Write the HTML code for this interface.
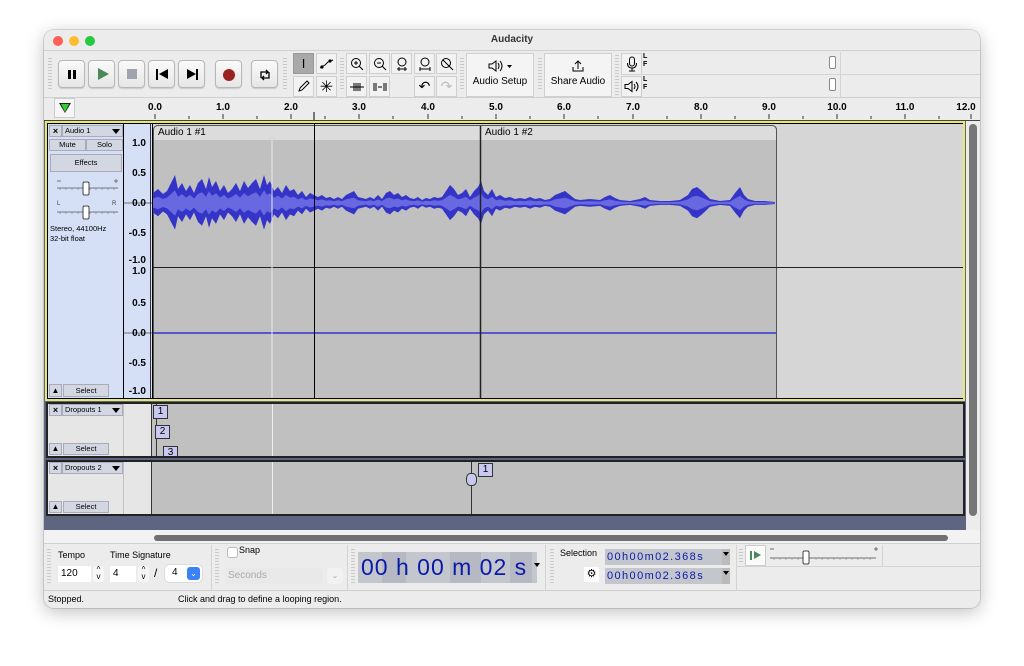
<!DOCTYPE html>
<html><head><meta charset="utf-8"><style>
*{box-sizing:border-box;margin:0;padding:0}
body{width:1024px;height:666px;background:#fff;position:relative;overflow:hidden;font-family:"Liberation Sans",sans-serif;color:#000}
.a{position:absolute}
.win{left:44px;top:30px;width:936px;height:578px;background:#ececec;border-radius:10px;box-shadow:0 4px 18px rgba(0,0,0,.25),0 0 0 1px rgba(0,0,0,.12);overflow:hidden}
.btn{position:absolute;width:27px;height:28px;background:linear-gradient(#fafafa,#e6e6e6);border:1px solid #b8b8b8;border-radius:4px;box-shadow:0 1px 1px rgba(0,0,0,.15)}
.tb{position:absolute;width:21px;height:21px;background:#f2f2f2;border:1px solid #cfcfcf;display:flex;align-items:center;justify-content:center;font-size:13px}
.grip{position:absolute;width:4px;background:repeating-linear-gradient(#c9c9c9 0 1px,transparent 1px 3px)}
.rl{position:absolute;top:102px;font-size:10px;font-weight:bold;transform:translateX(-50%)}
.lp{position:absolute;background:#d5dff5}
.small{font-size:7.5px;position:absolute}
.sel{position:absolute;background:#d3d7e2;border:1px solid #aab;font-size:7.5px;text-align:center}
.lab{position:absolute;background:#c8c8f0;border:1px solid #333;font-size:10px;width:15px;height:14px;text-align:center;line-height:12px}
</style></head><body>
<div class="a win">
 <div class="a" style="left:0;top:0;width:936px;height:20px;background:#ececec"></div>
 <div class="a" style="left:9px;top:6px;width:10px;height:10px;border-radius:50%;background:#fe5f57"></div>
 <div class="a" style="left:25px;top:6px;width:10px;height:10px;border-radius:50%;background:#febc2e"></div>
 <div class="a" style="left:41px;top:6px;width:10px;height:10px;border-radius:50%;background:#28c840"></div>
 <div class="a" style="left:0;top:4px;width:936px;text-align:center;font-size:10px;font-weight:bold;color:#333">Audacity</div>
 <div class="a" style="left:0;top:20px;width:936px;height:1px;background:#d0d0d0"></div>
</div>
<!-- toolbar -->
<div class="grip" style="left:48px;top:58px;height:33px"></div>
<div class="btn" style="left:58px;top:60px"><div class="a" style="left:9px;top:9px;width:3px;height:9px;background:#000"></div><div class="a" style="left:14px;top:9px;width:3px;height:9px;background:#000"></div></div>
<div class="btn" style="left:88px;top:60px"><div class="a" style="left:9px;top:7px;border-left:11px solid #4a8a5a;border-top:6px solid transparent;border-bottom:6px solid transparent"></div></div>
<div class="btn" style="left:118px;top:60px"><div class="a" style="left:8px;top:8px;width:10px;height:10px;background:#a0a4ac"></div></div>
<div class="btn" style="left:148px;top:60px"><div class="a" style="left:7px;top:8px;width:2px;height:11px;background:#000"></div><div class="a" style="left:10px;top:8px;border-right:9px solid #000;border-top:5.5px solid transparent;border-bottom:5.5px solid transparent"></div></div>
<div class="btn" style="left:178px;top:60px"><div class="a" style="left:8px;top:8px;border-left:9px solid #000;border-top:5.5px solid transparent;border-bottom:5.5px solid transparent"></div><div class="a" style="left:17px;top:8px;width:2px;height:11px;background:#000"></div></div>
<div class="btn" style="left:215px;top:60px"><div class="a" style="left:7px;top:8px;width:12px;height:12px;border-radius:50%;background:#9c2222"></div></div>
<div class="btn" style="left:251px;top:60px"><svg class="a" style="left:6px;top:7px" width="14" height="14" viewBox="0 0 14 14" fill="none" stroke="#000" stroke-width="1.3"><path d="M3 10V4h7M8 2l2 2-2 2M11 4v6H4M6 12l-2-2 2-2"/></svg></div>
<div class="grip" style="left:283px;top:58px;height:33px"></div>
<div class="tb" style="left:293px;top:53px;background:#a9a9a9;border-color:#999">I</div>
<div class="tb" style="left:316px;top:53px"><svg width="15" height="12"><path d="M1 10L6 7 9 4 14 2" stroke="#000" fill="none"/><circle cx="3" cy="9" r="1.6"/><circle cx="11" cy="3" r="1.6"/></svg></div>
<div class="tb" style="left:293px;top:76px"><svg width="13" height="13"><path d="M2 11l1-3 7-7 2 2-7 7z" stroke="#000" fill="none"/></svg></div>
<div class="tb" style="left:316px;top:76px;font-size:16px">✳</div>
<div class="grip" style="left:340px;top:58px;height:33px"></div>
<div class="tb" style="left:346px;top:53px"><svg width="14" height="14"><circle cx="6" cy="6" r="4.5" stroke="#000" fill="none"/><path d="M9 9l4 4M4 6h4M6 4v4" stroke="#000"/></svg></div>
<div class="tb" style="left:369px;top:53px"><svg width="14" height="14"><circle cx="6" cy="6" r="4.5" stroke="#000" fill="none"/><path d="M9 9l4 4M4 6h4" stroke="#000"/></svg></div>
<div class="tb" style="left:391px;top:53px"><svg width="14" height="14"><circle cx="7" cy="5" r="4" stroke="#000" fill="none"/><path d="M2 12h10M4 10v4M10 10v4" stroke="#000"/></svg></div>
<div class="tb" style="left:414px;top:53px"><svg width="14" height="14"><circle cx="7" cy="5" r="4" stroke="#000" fill="none"/><path d="M2 12h10M2 10v4M12 10v4" stroke="#000"/></svg></div>
<div class="tb" style="left:436px;top:53px"><svg width="14" height="14"><circle cx="6" cy="6" r="4.5" stroke="#000" fill="none"/><path d="M9 9l4 4M3 3l6 6" stroke="#000"/></svg></div>
<div class="tb" style="left:346px;top:76px"><svg width="16" height="12" stroke="#000" fill="none"><path d="M1 6h14M5 2v8M7 2v8M9 2v8M11 2v8"/></svg></div>
<div class="tb" style="left:369px;top:76px"><svg width="16" height="12" stroke="#000" fill="none"><path d="M2 2v8M4 2v8M6 6h4M12 2v8M14 2v8"/></svg></div>
<div class="tb" style="left:414px;top:76px;font-size:14px">↶</div>
<div class="tb" style="left:436px;top:76px;font-size:14px;color:#bbb">↷</div>
<div class="grip" style="left:460px;top:58px;height:33px"></div>
<div class="a" style="left:466px;top:53px;width:68px;height:44px;background:#f4f4f4;border:1px solid #cfcfcf;text-align:center;font-size:10px"><svg style="margin-top:5px" width="26" height="14" fill="none" stroke="#000"><path d="M2 5h3l4-3v10l-4-3H2z M11 4q2 3 0 6M13 2q4 5 0 10"/><path d="M20 6h5l-2.5 3z" fill="#000" stroke="none"/></svg><div style="margin-top:0">Audio Setup</div></div>
<div class="grip" style="left:538px;top:58px;height:33px"></div>
<div class="a" style="left:544px;top:53px;width:68px;height:44px;background:#f4f4f4;border:1px solid #cfcfcf;text-align:center;font-size:10px"><svg style="margin-top:5px" width="14" height="14" fill="none" stroke="#000"><path d="M2 8v4h10V8M7 10V2M4 5l3-3 3 3"/></svg><div style="margin-top:0">Share Audio</div></div>
<div class="grip" style="left:615px;top:55px;height:40px"></div>
<div class="tb" style="left:621px;top:53px;height:22px"><svg width="12" height="16" fill="none" stroke="#000"><rect x="3.5" y="1" width="5" height="9" rx="2.5"/><path d="M1.5 7q0 5 4.5 5t4.5-5M6 12v3M3 15h6"/></svg></div>
<div class="tb" style="left:621px;top:76px;height:21px"><svg width="16" height="13" fill="none" stroke="#000"><path d="M1 4.5h3l4-3v10l-4-3H1z M10 4q2 2.5 0 5M12 2q4 4.5 0 9"/></svg></div>
<div class="a" style="left:643px;top:53px;font-size:7px;font-weight:bold;line-height:8px">L<br>F</div>
<div class="a" style="left:643px;top:76px;font-size:7px;font-weight:bold;line-height:8px">L<br>F</div>
<div class="a" style="left:829px;top:56px;width:7px;height:13px;border:1px solid #888;background:#fff;border-radius:2px"></div>
<div class="a" style="left:829px;top:78px;width:7px;height:13px;border:1px solid #888;background:#fff;border-radius:2px"></div>
<div class="a" style="left:640px;top:74px;width:340px;height:1px;background:#d4d4d4"></div>
<div class="a" style="left:840px;top:52px;width:1px;height:45px;background:#d4d4d4"></div>
<div class="a" style="left:44px;top:97px;width:936px;height:1px;background:#d0d0d0"></div>
<!-- ruler -->
<div class="a" style="left:54px;top:98px;width:21px;height:20px;background:#f6f6f6;border:1px solid #ccc"><div class="a" style="left:4px;top:4px;border-top:10px solid #222;border-left:6px solid transparent;border-right:6px solid transparent"></div><div class="a" style="left:5.5px;top:5px;border-top:8px solid #3c3;border-left:4.5px solid transparent;border-right:4.5px solid transparent"></div></div>
<div class="rl" style="left:155px">0.0</div><div class="rl" style="left:223px">1.0</div><div class="rl" style="left:291px">2.0</div><div class="rl" style="left:359px">3.0</div><div class="rl" style="left:428px">4.0</div><div class="rl" style="left:496px">5.0</div><div class="rl" style="left:564px">6.0</div><div class="rl" style="left:633px">7.0</div><div class="rl" style="left:701px">8.0</div><div class="rl" style="left:769px">9.0</div><div class="rl" style="left:837px">10.0</div><div class="rl" style="left:905px">11.0</div><div class="rl" style="left:966px">12.0</div>
<svg class="a" style="left:0;top:112px" width="1024" height="9"><g stroke="#333"><path d="M155 2v5M189 4v3M223 2v5M257 4v3M291 2v5M325 4v3M359 2v5M393 4v3M428 2v5M462 4v3M496 2v5M530 4v3M564 2v5M598 4v3M633 2v5M667 4v3M701 2v5M735 4v3M769 2v5M803 4v3M837 2v5M871 4v3M905 2v5M939 4v3M971 2v5"/></g><path d="M314 -12v21" stroke="#000"/></svg>
<div class="a" style="left:44px;top:120px;width:936px;height:2px;background:#444"></div>
<!-- track area bg -->
<div class="a" style="left:44px;top:121px;width:922px;height:409px;background:#5e6580"></div>
<div class="a" style="left:966px;top:121px;width:14px;height:409px;background:#ececec"></div>
<div class="a" style="left:969px;top:124px;width:8px;height:392px;background:#777;border-radius:4px"></div>
<!-- audio track -->
<div class="a" style="left:45px;top:121px;width:920px;height:280px;border:2px solid #e8e870;background:#000"></div>
<div class="lp" style="left:48px;top:124px;width:75px;height:274px"></div>
<div class="a" style="left:124px;top:124px;width:28px;height:274px;background:#d5dff5"></div>
<div class="a" style="left:153px;top:124px;width:810px;height:274px;background:#d6d6d6"></div>
<div class="sel" style="left:49px;top:125px;width:13px;height:12px;font-size:9px;font-weight:bold;line-height:10px">×</div>
<div class="sel" style="left:62px;top:125px;width:61px;height:12px;text-align:left;padding-left:2px;line-height:10px">Audio 1<span style="position:absolute;right:2px;top:3px;border-top:5px solid #000;border-left:4px solid transparent;border-right:4px solid transparent"></span></div>
<div class="sel" style="left:49px;top:139px;width:37px;height:12px;line-height:10px">Mute</div>
<div class="sel" style="left:86px;top:139px;width:37px;height:12px;line-height:10px">Solo</div>
<div class="sel" style="left:50px;top:154px;width:72px;height:18px;line-height:16px">Effects</div>
<svg class="a" style="left:54px;top:178px" width="66" height="44"><g fill="none" stroke="#555" stroke-width=".7"><path d="M3 3h4M60 3h4M62 1v4M3 10h61M3 34h61"/></g><g stroke="#777" stroke-width=".6"><path d="M6 10v2M12 10v2M18 10v2M24 10v2M30 10v2M36 10v2M42 10v2M48 10v2M54 10v2M60 10v2M6 34v2M12 34v2M18 34v2M24 34v2M30 34v2M36 34v2M42 34v2M48 34v2M54 34v2M60 34v2"/></g><rect x="29" y="4" width="6" height="13" rx="1.5" fill="#fff" stroke="#444"/><rect x="29" y="28" width="6" height="13" rx="1.5" fill="#fff" stroke="#444"/><text x="3" y="27" font-size="6" fill="#444">L</text><text x="58" y="27" font-size="6" fill="#444">R</text></svg>
<div class="small" style="left:50px;top:224px;line-height:10px">Stereo, 44100Hz<br>32-bit float</div>
<div class="sel" style="left:49px;top:384px;width:13px;height:13px;font-size:8px;line-height:11px">▲</div>
<div class="sel" style="left:63px;top:384px;width:46px;height:13px;line-height:11px">Select</div>
<!-- vertical ruler labels -->
<div class="a" style="left:124px;top:124px;width:27px;height:274px;font-size:10px;font-weight:bold">
<div class="a" style="right:5px;top:14px">1.0</div><div class="a" style="right:5px;top:44px">0.5</div><div class="a" style="right:5px;top:74px">0.0</div><div class="a" style="right:5px;top:104px">-0.5</div><div class="a" style="right:5px;top:131px">-1.0</div>
<div class="a" style="right:5px;top:142px">1.0</div><div class="a" style="right:5px;top:174px">0.5</div><div class="a" style="right:5px;top:204px">0.0</div><div class="a" style="right:5px;top:234px">-0.5</div><div class="a" style="right:5px;top:262px">-1.0</div>
<div class="a" style="right:0;top:0;width:1px;height:274px;background:#333"></div>
</div>
<!-- clips -->
<div class="a" style="left:153px;top:125px;width:328px;height:273px;background:#c0c0c0;border-left:1px solid #555;border-top-left-radius:5px"></div>
<div class="a" style="left:153px;top:125px;width:328px;height:15px;background:#dcdcdc;border:1px solid #555;border-bottom:none;border-top-left-radius:5px;font-size:10px;padding-left:4px;line-height:14px">Audio 1 #1</div>
<div class="a" style="left:480px;top:125px;width:297px;height:273px;background:#c0c0c0;border-left:1px solid #333;border-right:1px solid #555;border-top-right-radius:5px"></div>
<div class="a" style="left:480px;top:125px;width:297px;height:15px;background:#dcdcdc;border:1px solid #555;border-bottom:none;border-top-right-radius:5px;font-size:10px;padding-left:4px;line-height:14px">Audio 1 #2</div>
<svg class="a" style="left:0;top:0" width="1024" height="666">
<defs><path id="w" d="M153 0L153 -10L158 -14L163 -9L167 -12L172 -22L175 -28L178 -14L182 -20L186 -12L190 -18L194 -10L198 -20L202 -24L206 -14L209 -26L212 -16L216 -22L220 -12L224 -18L228 -10L232 -14L236 -20L240 -12L244 -22L248 -15L252 -20L256 -24L260 -14L264 -28L267 -18L270 -22L274 -12L278 -16L282 -10L286 -18L290 -12L294 -14L298 -8L302 -12L306 -6L310 -10L314 -8L318 -6L322 -8L326 -5L330 -6L334 -4L338 -6L342 -4L346 -8L350 -10L354 -12L358 -6L362 -5L366 -4L370 -6L374 -4L378 -8L382 -4L386 -10L390 -12L394 -8L398 -10L402 -6L406 -8L410 -5L414 -4L418 -6L422 -3L426 -5L430 -4L434 -6L438 -5L442 -6L446 -12L450 -18L454 -14L458 -8L462 -10L466 -14L470 -6L474 -12L478 -16L481 -22L484 -12L488 -8L492 -14L496 -6L500 -8L505 -5L510 -6L515 -4L520 -5L525 -4L530 -6L535 -4L540 -5L545 -3L550 -4L555 -8L560 -10L565 -12L570 -8L575 -4L580 -3L590 -4L600 -3L605 -6L610 -8L615 -5L620 -3L630 -2L640 -4L645 -6L650 -3L660 -2L670 -2L680 -3L688 -8L692 -14L697 -16L702 -12L706 -8L710 -4L720 -2L730 -3L735 -10L740 -16L744 -8L748 -4L755 -2L765 -2L775 -1L775 0Z"/></defs>
<g transform="translate(0,203)"><use href="#w" fill="#3434c8"/><use href="#w" fill="#3434c8" transform="scale(1,-0.95)"/><use href="#w" fill="#6868e0" transform="scale(1,0.45)"/><use href="#w" fill="#6868e0" transform="scale(1,-0.45)"/></g>
<path d="M153 267.5H963" stroke="#222"/>
<path d="M153 333H776" stroke="#3434c8" stroke-width="1.5"/>
<path d="M272 140V398" stroke="#e8e8e8"/>
<path d="M314.5 124V398" stroke="#000"/>
<path d="M480.5 126V398" stroke="#222" stroke-width="1.5"/>
<path d="M124 203h28M124 333h28" stroke="#000" stroke-width=".5"/>
</svg>
<!-- dropouts 1 -->
<div class="a" style="left:46px;top:402px;width:919px;height:56px;border:2px solid #222;background:#c0c0c0"></div>
<div class="a" style="left:48px;top:404px;width:75px;height:52px;background:#e6e6e6"></div>
<div class="a" style="left:124px;top:404px;width:28px;height:52px;background:#e6e6e6;border-right:1px solid #333"></div>
<div class="sel" style="left:49px;top:404px;width:13px;height:12px;font-size:9px;font-weight:bold;line-height:10px">×</div>
<div class="sel" style="left:62px;top:404px;width:61px;height:12px;text-align:left;padding-left:2px;line-height:10px">Dropouts 1<span style="position:absolute;right:2px;top:3px;border-top:5px solid #000;border-left:4px solid transparent;border-right:4px solid transparent"></span></div>
<div class="sel" style="left:49px;top:443px;width:13px;height:12px;font-size:8px;line-height:10px">▲</div>
<div class="sel" style="left:63px;top:443px;width:46px;height:12px;line-height:10px">Select</div>
<div class="a" style="left:272px;top:404px;width:1px;height:52px;background:#eee"></div>
<div class="a" style="left:156px;top:404px;width:1px;height:52px;background:#333"></div>
<div class="lab" style="left:153px;top:405px">1</div>
<div class="lab" style="left:155px;top:425px">2</div>
<div class="lab" style="left:163px;top:446px;height:10px;border-bottom:none">3</div>
<!-- dropouts 2 -->
<div class="a" style="left:46px;top:460px;width:919px;height:56px;border:2px solid #222;background:#c0c0c0"></div>
<div class="a" style="left:48px;top:462px;width:75px;height:52px;background:#e6e6e6"></div>
<div class="a" style="left:124px;top:462px;width:28px;height:52px;background:#e6e6e6;border-right:1px solid #333"></div>
<div class="sel" style="left:49px;top:462px;width:13px;height:12px;font-size:9px;font-weight:bold;line-height:10px">×</div>
<div class="sel" style="left:62px;top:462px;width:61px;height:12px;text-align:left;padding-left:2px;line-height:10px">Dropouts 2<span style="position:absolute;right:2px;top:3px;border-top:5px solid #000;border-left:4px solid transparent;border-right:4px solid transparent"></span></div>
<div class="sel" style="left:49px;top:501px;width:13px;height:12px;font-size:8px;line-height:10px">▲</div>
<div class="sel" style="left:63px;top:501px;width:46px;height:12px;line-height:10px">Select</div>
<div class="a" style="left:272px;top:462px;width:1px;height:52px;background:#eee"></div>
<div class="a" style="left:471px;top:462px;width:1px;height:52px;background:#333"></div>
<div class="a" style="left:466px;top:473px;width:11px;height:13px;border:1.5px solid #333;border-radius:40%;background:#c8c8f0"></div>
<div class="lab" style="left:478px;top:463px">1</div>
<!-- h scrollbar -->
<div class="a" style="left:44px;top:530px;width:936px;height:13px;background:#f2f2f2"></div>
<div class="a" style="left:154px;top:535px;width:794px;height:6px;background:#707070;border-radius:3px"></div>
<div class="a" style="left:44px;top:543px;width:936px;height:1px;background:#d0d0d0"></div>
<!-- bottom toolbars -->
<div class="grip" style="left:47px;top:549px;height:36px"></div>
<div class="a" style="left:58px;top:550px;font-size:9px">Tempo</div>
<div class="a" style="left:110px;top:550px;font-size:9px">Time Signature</div>
<div class="a" style="left:58px;top:566px;width:33px;height:16px;background:#fff;font-size:10px;padding:2px 3px">120</div>
<div class="a" style="left:93px;top:566px;width:11px;height:16px;font-size:8px;line-height:7px;text-align:center;background:#f6f6f6;border-radius:3px">^<br>v</div>
<div class="a" style="left:110px;top:566px;width:26px;height:16px;background:#fff;font-size:10px;padding:2px 3px">4</div>
<div class="a" style="left:138px;top:566px;width:11px;height:16px;font-size:8px;line-height:7px;text-align:center;background:#f6f6f6;border-radius:3px">^<br>v</div>
<div class="a" style="left:154px;top:566px;font-size:12px">/</div>
<div class="a" style="left:165px;top:565px;width:37px;height:17px;background:#fff;border-radius:4px;box-shadow:0 0 1px #888;font-size:10px;padding:2px 7px">4</div>
<div class="a" style="left:187px;top:567px;width:13px;height:13px;background:#3b82f6;border-radius:3px;color:#fff;font-size:8px;text-align:center;line-height:13px">⌄</div>
<div class="a" style="left:211px;top:545px;width:1px;height:45px;background:#d4d4d4"></div>
<div class="grip" style="left:215px;top:549px;height:36px"></div>
<div class="a" style="left:227px;top:547px;width:11px;height:11px;background:#fff;border:1px solid #bbb;border-radius:3px"></div>
<div class="a" style="left:239px;top:545px;font-size:9px">Snap</div>
<div class="a" style="left:226px;top:568px;width:97px;height:16px;background:#e9e9e9;font-size:10px;color:#aaa;padding:2px 2px">Seconds</div>
<div class="a" style="left:327px;top:568px;width:16px;height:16px;background:#f2f2f2;border-radius:4px;font-size:8px;color:#aaa;text-align:center;line-height:16px">⌄</div>
<div class="a" style="left:347px;top:545px;width:1px;height:45px;background:#d4d4d4"></div>
<div class="grip" style="left:351px;top:549px;height:36px"></div>
<div class="a" style="left:358px;top:552px;width:179px;height:31px;background:#c4c6ce"></div>
<div class="a" style="left:382px;top:552px;width:24px;height:31px;background:#b6b8c4"></div>
<div class="a" style="left:450px;top:552px;width:31px;height:31px;background:#b6b8c4"></div>
<div class="a" style="left:510px;top:552px;width:22px;height:31px;background:#b6b8c4"></div>
<div class="a" style="left:358px;top:552px;width:179px;height:31px;font-size:23px;color:#0a1aa8;line-height:31px;white-space:pre;letter-spacing:1px;padding-left:3px">00 h 00 m 02 s</div>
<div class="a" style="left:534px;top:563px;border-top:4px solid #000;border-left:3px solid transparent;border-right:3px solid transparent"></div>
<div class="a" style="left:545px;top:545px;width:1px;height:45px;background:#d4d4d4"></div>
<div class="grip" style="left:550px;top:549px;height:36px"></div>
<div class="a" style="left:560px;top:548px;font-size:9px">Selection</div>
<div class="a" style="left:584px;top:567px;width:15px;height:15px;background:#fff;font-size:11px;text-align:center;line-height:15px">⚙︎</div>
<div class="a" style="left:605px;top:549px;width:117px;height:16px;background:#c4c6ce;color:#0a1aa8;font-size:11px;letter-spacing:1.4px;padding-left:2px;line-height:16px">00h00m02.368s</div>
<div class="a" style="left:605px;top:568px;width:117px;height:16px;background:#c4c6ce;color:#0a1aa8;font-size:11px;letter-spacing:1.4px;padding-left:2px;line-height:16px">00h00m02.368s</div>
<div class="a" style="left:722px;top:549px;width:8px;height:16px;background:#bbb"></div><div class="a" style="left:723px;top:552px;border-top:4px solid #000;border-left:3px solid transparent;border-right:3px solid transparent"></div>
<div class="a" style="left:722px;top:568px;width:8px;height:16px;background:#bbb"></div><div class="a" style="left:723px;top:571px;border-top:4px solid #000;border-left:3px solid transparent;border-right:3px solid transparent"></div>
<div class="a" style="left:736px;top:545px;width:1px;height:45px;background:#d4d4d4"></div>
<div class="grip" style="left:739px;top:549px;height:14px"></div>
<div class="a" style="left:745px;top:545px;width:21px;height:21px;background:#fbfbfb;border:1px solid #ccc"><div class="a" style="left:4px;top:5px;width:2px;height:9px;background:#4a8a5a"></div><div class="a" style="left:8px;top:5px;border-left:7px solid #4a8a5a;border-top:4.5px solid transparent;border-bottom:4.5px solid transparent"></div></div>
<svg class="a" style="left:768px;top:545px" width="112" height="22"><path d="M2 4h4M106 4h4M108 2v4M2 13h106" stroke="#444" stroke-width=".7" fill="none"/><path d="M6 13v2M12 13v2M18 13v2M24 13v2M30 13v2M36 13v2M48 13v2M54 13v2M60 13v2M66 13v2M72 13v2M78 13v2M84 13v2M90 13v2M96 13v2M102 13v2" stroke="#888" stroke-width=".6"/><rect x="35" y="6" width="6" height="13" rx="1.5" fill="#fff" stroke="#444"/></svg>
<div class="a" style="left:882px;top:545px;width:1px;height:22px;background:#d4d4d4"></div>
<div class="a" style="left:737px;top:566px;width:243px;height:1px;background:#d4d4d4"></div>
<div class="a" style="left:44px;top:590px;width:936px;height:1px;background:#d0d0d0"></div>
<div class="a" style="left:48px;top:594px;font-size:9px">Stopped.</div>
<div class="a" style="left:178px;top:594px;font-size:9px">Click and drag to define a looping region.</div>
</body></html>
